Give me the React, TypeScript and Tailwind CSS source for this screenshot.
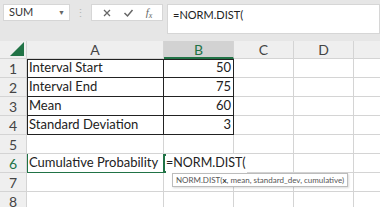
const rows = [
  { n: 1, a: 'Interval Start', b: '50' },
  { n: 2, a: 'Interval End', b: '75' },
  { n: 3, a: 'Mean', b: '60' },
  { n: 4, a: 'Standard Deviation', b: '3' },
  { n: 5, a: '', b: '' },
  { n: 6, a: 'Cumulative Probability', b: '' },
  { n: 7, a: '', b: '' },
  { n: 8, a: '', b: '' },
]

const cell = 'h-[19px] shrink-0 border-r border-b border-[#d4d4d4]'

const App = () => (
  <div className="relative h-[207px] w-[380px] overflow-hidden bg-white font-['Lato',_sans-serif] text-[#222]">
    <div className="flex h-[41px] items-start gap-0 bg-[#e6e6e6] pt-[4px]">
      <div className="ml-[3px] flex h-[17px] w-[67px] items-center justify-between border border-[#d6d6d6] bg-white pr-[4px] pl-[5px] text-[11px] text-[#333]">
        <span>SUM</span>
        <span className="text-[7px] text-[#666]">▼</span>
      </div>
      <div className="flex w-[21px] justify-center pt-[3px] text-[11px] leading-none text-[#b5b5b5]">⋮</div>
      <div className="flex h-[17px] w-[72px] items-center justify-around border border-[#d6d6d6] bg-white px-[4px] text-[#555]">
        <svg width="10" height="10" viewBox="0 0 10 10" fill="none" stroke="#666" strokeWidth="1.3">
          <path d="M2 2 8 8M8 2 2 8" />
        </svg>
        <svg width="11" height="10" viewBox="0 0 11 10" fill="none" stroke="#666" strokeWidth="1.5">
          <path d="M1.5 5 4.5 8 9.5 2" />
        </svg>
        <span className="font-['Liberation_Serif',_serif] text-[11px] italic text-[#666]">f<sub className="text-[8px]">x</sub></span>
      </div>
      <div className="ml-[4px] h-[30px] flex-1 border border-[#d6d6d6] bg-white pt-[2px] pl-[5px] text-[11px]">
        =NORM.DIST(
      </div>
    </div>

    <div className="flex h-[18px] bg-[#efefef] text-[14px] text-[#444]">
      <div className="flex h-[18px] w-[27px] shrink-0 items-end justify-end border-r border-b border-[#d4d4d4] pr-[2px] pb-[2px]">
        <div className="h-0 w-0 border-t-[14px] border-l-[14px] border-t-transparent border-l-transparent border-b-0 border-r-[14px] border-r-[#217346] [border-top-style:solid]" />
      </div>
      <div className="flex w-[137px] shrink-0 items-center justify-center border-r border-b border-[#d4d4d4]">A</div>
      <div className="flex w-[70px] shrink-0 items-center justify-center border-r border-b-2 border-[#d4d4d4] border-b-[#217346] bg-[#d2d2d2] text-[#217346]">B</div>
      <div className="flex w-[60px] shrink-0 items-center justify-center border-r border-b border-[#d4d4d4]">C</div>
      <div className="flex w-[60px] shrink-0 items-center justify-center border-r border-b border-[#d4d4d4]">D</div>
      <div className="flex-1 border-b border-[#d4d4d4]" />
    </div>

    {rows.map((r) => {
      const boxed = r.n <= 4
      return (
        <div key={r.n} className="flex text-[13px]">
          <div className={`${cell} flex w-[27px] items-center justify-center bg-[#efefef] text-[14px] ${r.n === 6 ? 'text-[#217346]' : 'text-[#444]'}`}>
            {r.n}
          </div>
          <div
            className={`${cell} flex w-[137px] items-center pl-[2px] whitespace-nowrap ${
              boxed ? 'border-r-[#222] border-b-[#222] shadow-[inset_1px_0_0_#222]' : ''
            } ${r.n === 1 ? 'shadow-[inset_1px_1px_0_#222]' : ''} ${r.n === 6 ? 'shadow-[inset_1px_0_0_#217346] border-r-[#217346] border-b-[#217346]' : ''}`}
          >
            {r.a}
          </div>
          {r.n === 6 ? (
            <div className="relative z-10 flex h-[19px] w-[70px] shrink-0 items-center overflow-visible border-y-2 border-l border-[#217346] pl-[1px] text-[12.5px] whitespace-nowrap">
              <span className="bg-white pr-[1px]">=NORM.DIST(</span>
            </div>
          ) : (
            <div
              className={`${cell} flex w-[70px] items-center justify-end pr-[2px] ${
                boxed ? 'border-r-[#222] border-b-[#222]' : ''
              } ${r.n === 1 ? 'shadow-[inset_0_1px_0_#222]' : ''}`}
            >
              {r.b}
            </div>
          )}
          <div className={`${cell} w-[60px]`} />
          <div className={`${cell} w-[60px]`} />
          <div className="h-[19px] flex-1 border-b border-[#d4d4d4]" />
        </div>
      )
    })}

    <div className="absolute top-[173px] left-[172px] z-20 border border-[#bcbcbc] bg-white px-[3px] py-[1px] text-[8px] leading-[10px] whitespace-nowrap text-[#555] shadow-[1px_1px_2px_rgba(0,0,0,0.15)]">
      NORM.DIST(<b className="text-[#333]">x</b>, mean, standard_dev, cumulative)
    </div>
  </div>
)

export default App
